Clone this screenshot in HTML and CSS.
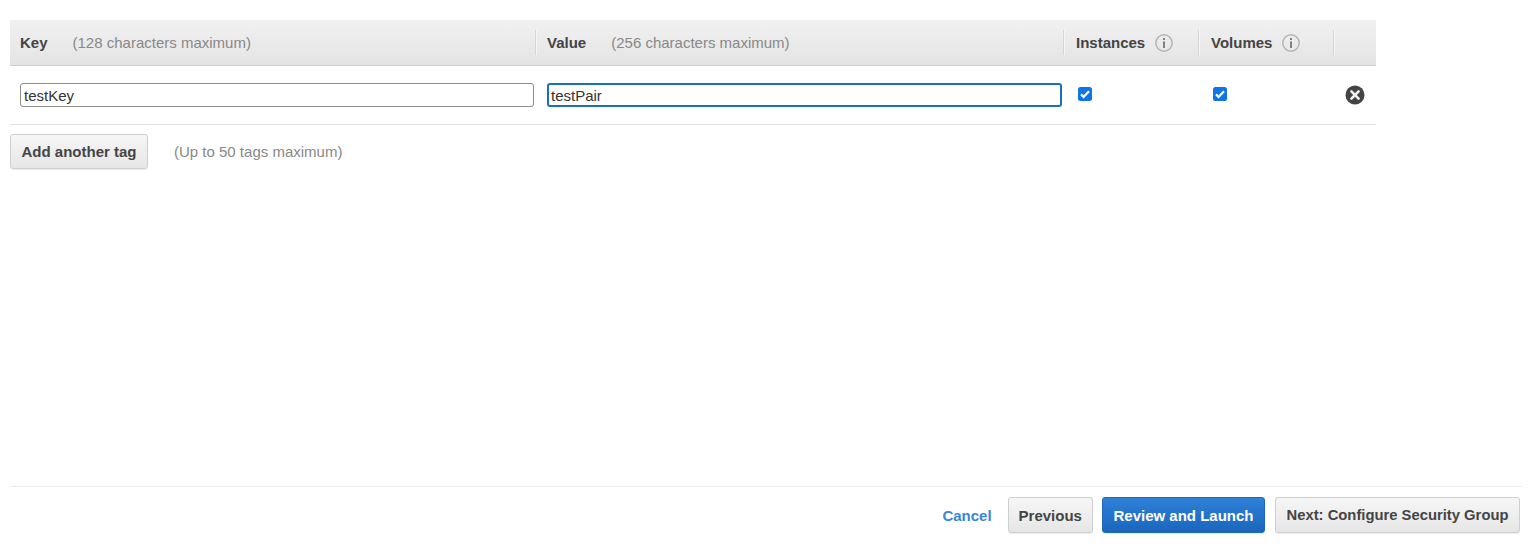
FILE: index.html
```html
<!DOCTYPE html>
<html lang="en">
<head>
<meta charset="utf-8">
<title>Add tags</title>
<link rel="stylesheet" href="styles.css">
</head>
<body>
<main class="page">
  <section class="tags">
    <div class="grid head">
      <div class="hcell"><b>Key</b><span class="hint">(128 characters maximum)</span></div>
      <div class="hcell"><b>Value</b><span class="hint">(256 characters maximum)</span></div>
      <div class="hcell"><b>Instances</b>
        <svg class="info" viewBox="0 0 18 18"><circle cx="9" cy="9" r="8.2" fill="none" stroke="#b5b5b5" stroke-width="1.5"/><rect x="8" y="7.5" width="2" height="6.5" fill="#808080"/><rect x="8" y="4" width="2" height="2" fill="#808080"/></svg>
      </div>
      <div class="hcell"><b>Volumes</b>
        <svg class="info" viewBox="0 0 18 18"><circle cx="9" cy="9" r="8.2" fill="none" stroke="#b5b5b5" stroke-width="1.5"/><rect x="8" y="7.5" width="2" height="6.5" fill="#808080"/><rect x="8" y="4" width="2" height="2" fill="#808080"/></svg>
      </div>
      <div class="hcell last"></div>
    </div>
    <div class="grid row">
      <div class="cell"><input class="field" type="text" value="testKey"></div>
      <div class="cell"><input class="field focus" type="text" value="testPair"></div>
      <div class="cell"><input class="check" type="checkbox" checked></div>
      <div class="cell"><input class="check" type="checkbox" checked></div>
      <div class="cell">
        <svg class="remove" viewBox="0 0 20 20"><circle cx="10" cy="10" r="9.5" fill="#444"/><path d="M6.4 6.4l7.2 7.2M13.6 6.4l-7.2 7.2" stroke="#f4f4f4" stroke-width="2.6" stroke-linecap="round"/></svg>
      </div>
    </div>
  </section>
  <div class="add">
    <button class="btn add-btn" type="button">Add another tag</button>
    <span class="hint">(Up to 50 tags maximum)</span>
  </div>
  <footer class="footer">
    <a class="cancel" href="#">Cancel</a>
    <button class="btn prev" type="button">Previous</button>
    <button class="btn primary" type="button">Review and Launch</button>
    <button class="btn next" type="button">Next: Configure Security Group</button>
  </footer>
</main>
</body>
</html>
```
FILE: styles.css
```css
* { box-sizing: border-box; }
html, body { margin: 0; height: 100%; background: #fff; overflow: hidden; }
body { font: 15px "Liberation Sans", Arial, sans-serif; color: #444; }

.page {
  height: 553px;
  padding: 20px 14px 0 10px;
  display: flex;
  flex-direction: column;
}

.tags { width: 1366px; }

.grid {
  display: grid;
  grid-template-columns: 526px 528px 135px 135px 42px;
}

.head {
  height: 46px;
  background: linear-gradient(#f1f1f1, #e4e4e4);
  border-bottom: 1px solid #cfcfcf;
}

.hcell {
  display: flex;
  align-items: center;
  padding-left: 10px;
  position: relative;
}
.hcell::after {
  content: "";
  position: absolute;
  right: 0;
  top: 10px;
  bottom: 10px;
  width: 1px;
  background: #d6d6d6;
  box-shadow: 1px 0 0 #f6f6f6;
}
.hcell.last::after { display: none; }
.hcell:nth-child(2) { padding-left: 11px; }
.hcell:nth-child(3) { padding-left: 12px; }
.hcell:nth-child(4) { padding-left: 12px; }

.hint { color: #888; margin-left: 25px; }
.hcell b { color: #444; }
.add .hint { margin-left: 26px; }

.info { width: 18px; height: 18px; margin-left: 10px; }

.row {
  height: 59px;
  border-bottom: 1px solid #e0e0e0;
  padding-top: 17px;
}
.cell { display: flex; align-items: flex-start; }

.field {
  height: 24px;
  font: 15px "Liberation Sans", Arial, sans-serif;
  color: #333;
  background: #fff;
  border: 1px solid #8d8d8d;
  border-radius: 3px;
  padding: 0 3px;
  outline: none;
}
.cell:nth-child(1) .field { width: 514px; margin-left: 10px; }
.cell:nth-child(2) .field { width: 515px; margin-left: 11px; }
.field.focus { border: 2px solid #1a6fc4; padding: 0 2px; }

.check {
  appearance: none;
  width: 14px;
  height: 14px;
  margin: 4px 0 0 14px;
  border-radius: 2.5px;
  background: #0f74e8 url("data:image/svg+xml,%3Csvg xmlns='http://www.w3.org/2000/svg' viewBox='0 0 14 14'%3E%3Cpath d='M3 7.4l2.6 2.6L11 4.2' fill='none' stroke='%23fff' stroke-width='2.2'/%3E%3C/svg%3E") center / 14px no-repeat;
}

.remove { width: 20px; height: 20px; margin: 2px 0 0 11px; }

.add {
  display: flex;
  align-items: center;
  margin-top: 9px;
}

.btn {
  height: 36px;
  padding: 0 10.5px;
  font: bold 15px "Liberation Sans", Arial, sans-serif;
  color: #444;
  background: linear-gradient(#f6f6f6, #e6e6e6);
  border: 1px solid #cfcfcf;
  border-radius: 3px;
  box-shadow: 0 1px 1px rgba(0, 0, 0, .08);
}
.add-btn { height: 35px; }
.prev { padding: 0 10px; }
.next { margin-left: 1px; font-size: 14.8px; }

.primary {
  color: #fff;
  background: linear-gradient(#2f80d8, #1a66bd);
  border-color: #1c69bf;
}

.footer {
  margin-top: auto;
  margin-bottom: 20px;
  padding-top: 10px;
  padding-right: 2px;
  border-top: 1px solid #eee;
  display: flex;
  justify-content: flex-end;
  align-items: center;
  width: 1512px;
  gap: 9px;
}
.cancel {
  color: #3a87d6;
  font-weight: bold;
  text-decoration: none;
  margin-right: 7px;
}
```
